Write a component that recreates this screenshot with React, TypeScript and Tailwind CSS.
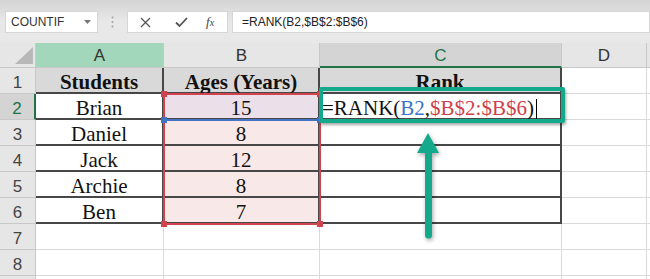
import React from "react";

const ROWHDR = "flex items-center justify-center pt-[4px] text-[17px] text-[#444] bg-[#e6e6e6] border-r border-b border-[#c8c8c8]";
const SERIF = { fontFamily: '"Liberation Serif", serif' };

function Cell({ children, className = "" }: { children?: React.ReactNode; className?: string }) {
  return <div className={"h-[26px] flex items-center justify-center pt-[5px] " + className} style={SERIF}>{children}</div>;
}

export default function App() {
  const names = ["Brian", "Daniel", "Jack", "Archie", "Ben"];
  const ages = ["15", "8", "12", "8", "7"];
  const light = "border-r border-b border-[#dadada] bg-white";
  const dark = "border-r-2 border-b-2 border-[#474747]";
  const colHdr = "h-[25px] border-r border-b border-[#c8c8c8] flex items-center justify-center pt-[2px] text-[17px]";
  return (
    <div className="w-[650px] h-[279px] overflow-hidden bg-white" style={{ fontFamily: '"Liberation Sans", Arial, sans-serif' }}>
      {/* Toolbar */}
      <div className="h-[43px] bg-gradient-to-b from-[#d4d4d4] via-[#e8e8e8] to-[#e8e8e8] flex items-start pt-[11px] pl-[5px]">
        <div className="w-[93px] h-[22px] bg-white border border-[#d6d6d6] flex items-center pl-[5px] pr-[6px] justify-between">
          <span className="text-[12px] text-[#333]">COUNTIF</span>
          <svg width="7" height="4" viewBox="0 0 7 4"><path d="M0 0h7L3.5 4z" fill="#777" /></svg>
        </div>
        <div className="w-[29px] h-[22px] flex items-center justify-center">
          <svg width="3" height="12" viewBox="0 0 3 12"><circle cx="1.5" cy="1.5" r="1" fill="#a0a0a0" /><circle cx="1.5" cy="6" r="1" fill="#a0a0a0" /><circle cx="1.5" cy="10.5" r="1" fill="#a0a0a0" /></svg>
        </div>
        <div className="w-[101px] h-[22px] bg-white border border-[#d6d6d6] flex items-center">
          <svg className="ml-[12px]" width="11" height="11" viewBox="0 0 11 11"><path d="M1 1l9 9M10 1l-9 9" stroke="#555" strokeWidth="1.3" /></svg>
          <svg className="ml-[24px]" width="13" height="10" viewBox="0 0 13 10"><path d="M1 5.5l3.5 3.5L12 1" stroke="#555" strokeWidth="1.8" fill="none" /></svg>
          <span className="ml-[18px] text-[13px] italic text-[#444]" style={SERIF}>f<span className="text-[10px]">x</span></span>
        </div>
        <div className="ml-[4px] flex-1 h-[22px] bg-white border border-[#d6d6d6] flex items-center pl-[9px]">
          <span className="text-[12px] text-[#222]">=RANK(B2,$B$2:$B$6)</span>
        </div>
      </div>

      {/* Grid */}
      <div className="relative">
        <div className="grid grid-cols-[36px_128px_156px_242px_85px_1fr] text-[#111]">
          {/* header row */}
          <div className="h-[25px] bg-[#e6e6e6] border-r border-b border-[#c8c8c8] relative">
            <svg className="absolute left-[15px] top-[4px]" width="18" height="17" viewBox="0 0 18 17"><path d="M18 0V17H0z" fill="#b8b8b8" /></svg>
          </div>
          <div className={colHdr + " bg-[#a3d7bb] text-[#333]"}>A</div>
          <div className={colHdr + " bg-[#e6e6e6] text-[#333]"}>B</div>
          <div className="h-[25px] bg-[#d4d4d4] border-r border-b-2 border-r-[#c8c8c8] border-b-[#217346] flex items-center justify-center pt-[2px] text-[17px] text-[#217346]">C</div>
          <div className={colHdr + " bg-[#e6e6e6] text-[#333]"}>D</div>
          <div className="h-[25px] bg-[#e6e6e6] border-b border-[#c8c8c8]" />

          {/* row 1 */}
          <div className={"h-[26px] " + ROWHDR}>1</div>
          <Cell className={dark + " bg-[#d9d9d9] font-bold text-[21px]"}>Students</Cell>
          <Cell className={dark + " bg-[#d9d9d9] font-bold text-[21px]"}>Ages (Years)</Cell>
          <Cell className={dark + " bg-[#d9d9d9] font-bold text-[21px]"}>Rank</Cell>
          <Cell className={light} />
          <Cell className="border-b border-[#dadada]" />

          {names.map((n, i) => (
            <React.Fragment key={n}>
              <div className={"h-[26px] " + (i === 0 ? "flex items-center justify-center pt-[4px] text-[17px] text-[#217346] bg-[#d4d4d4] border-r-2 border-b border-r-[#217346] border-b-[#c8c8c8]" : ROWHDR)}>{i + 2}</div>
              <Cell className={dark + " bg-white text-[21px]"}>{n}</Cell>
              <Cell className={dark + (i === 0 ? " bg-[#ebe0ea]" : " bg-[#f9e8e8]") + " text-[21px]"}>{ages[i]}</Cell>
              <Cell className={dark + " bg-white text-[21px] !justify-start pl-[2px]"}>
                {i === 0 && (
                  <span className="flex items-center whitespace-nowrap">
                    <span>=RANK(</span>
                    <span className="text-[#3b73c8]">B2</span>
                    <span>,</span>
                    <span className="text-[#d0404a]">$B$2:$B$6</span>
                    <span>)</span>
                    <span className="ml-[2px] w-px h-[20px] bg-black" />
                  </span>
                )}
              </Cell>
              <Cell className={light} />
              <Cell className="border-b border-[#dadada]" />
            </React.Fragment>
          ))}

          {[7, 8, 0].map((r) => (
            <React.Fragment key={r}>
              <div className={"h-[26px] " + ROWHDR}>{r > 0 ? r : ""}</div>
              <Cell className={light} />
              <Cell className={light} />
              <Cell className={light} />
              <Cell className={light} />
              <Cell className="border-b border-[#dadada]" />
            </React.Fragment>
          ))}
        </div>

        {/* range highlight B2:B6 */}
        <div className="absolute left-[163px] top-[50px] w-[158px] h-[132px] border-2 border-[#d1434f]" />
        <div className="absolute left-[163px] top-[76px] w-[158px] h-[2px] bg-[#4472c4]" />
        <div className="absolute left-[161px] top-[48px] w-[6px] h-[6px] bg-[#d1434f]" />
        <div className="absolute left-[317px] top-[48px] w-[6px] h-[6px] bg-[#d1434f]" />
        <div className="absolute left-[161px] top-[74px] w-[6px] h-[6px] bg-[#4472c4]" />
        <div className="absolute left-[317px] top-[74px] w-[6px] h-[6px] bg-[#4472c4]" />
        <div className="absolute left-[161px] top-[178px] w-[6px] h-[6px] bg-[#d1434f]" />
        <div className="absolute left-[317px] top-[178px] w-[6px] h-[6px] bg-[#d1434f]" />

        {/* annotation box */}
        <div className="absolute left-[319px] top-[44px] w-[246px] h-[36px] border-4 border-[#14a98b] rounded-[2px] shadow-[1px_2px_3px_rgba(0,0,0,0.35)]" />

        {/* arrow */}
        <svg className="absolute left-[410px] top-[86px]" width="36" height="116" viewBox="0 0 36 116" style={{ filter: "drop-shadow(1px 2px 2px rgba(0,0,0,0.35))" }}>
          <path d="M18 4L7 24H29z" fill="#14a98b" />
          <line x1="18.5" y1="22" x2="18.5" y2="106" stroke="#14a98b" strokeWidth="7" strokeLinecap="round" />
        </svg>
      </div>
    </div>
  );
}
